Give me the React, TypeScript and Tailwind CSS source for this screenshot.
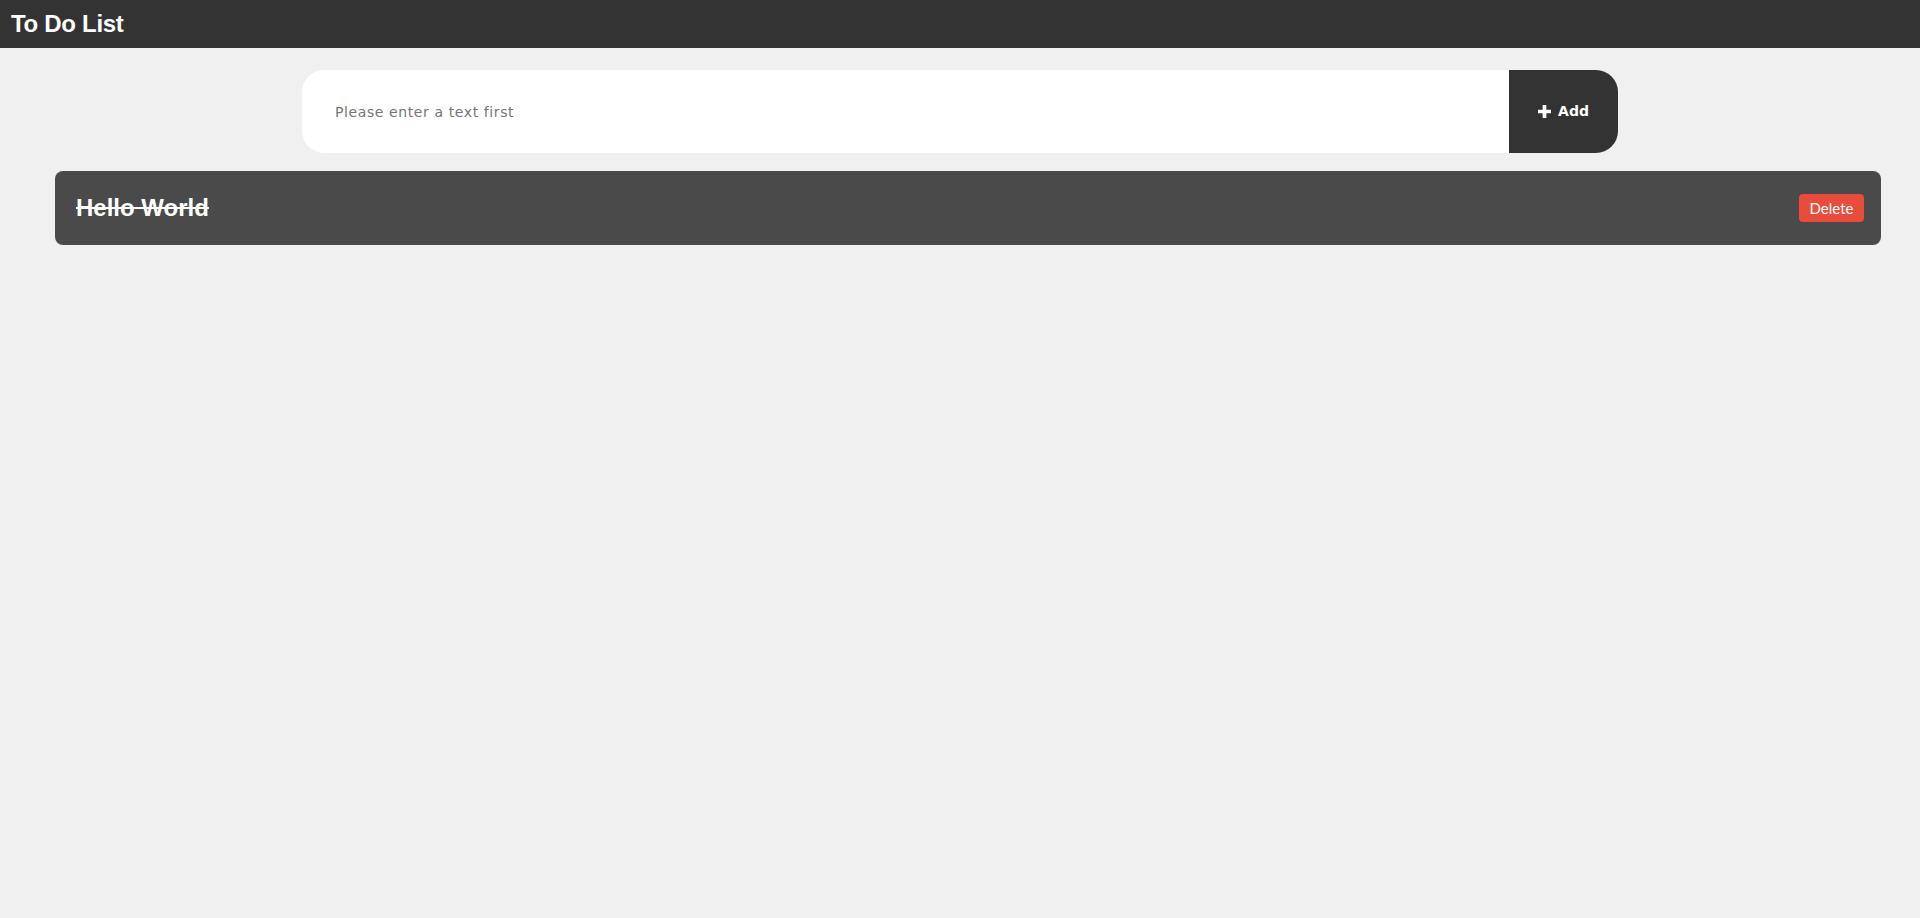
import { useState } from "react";

interface TodoItem {
  id: number;
  text: string;
  done: boolean;
}

function PlusIcon() {
  return (
    <svg viewBox="0 0 14 14" className="h-[13px] w-[13px]" fill="currentColor">
      <path d="M5 0h4v5h5v4H9v5H5V9H0V5h5z" />
    </svg>
  );
}

export default function App() {
  const [text, setText] = useState("");
  const [todos, setTodos] = useState<TodoItem[]>([
    { id: 1, text: "Hello World", done: true },
  ]);

  const addTodo = () => {
    if (!text.trim()) return;
    setTodos([...todos, { id: Date.now(), text: text.trim(), done: false }]);
    setText("");
  };

  const toggleTodo = (id: number) => {
    setTodos(todos.map((t) => (t.id === id ? { ...t, done: !t.done } : t)));
  };

  const deleteTodo = (id: number) => {
    setTodos(todos.filter((t) => t.id !== id));
  };

  return (
    <div className="min-h-screen bg-[#f0f0f0] font-['Liberation_Sans',Arial,sans-serif]">
      <header className="flex h-[48px] items-center bg-[#333333] px-[11px]">
        <h1 className="text-[24px] font-bold tracking-[-0.3px] text-white">To Do List</h1>
      </header>

      <div className="mx-auto mt-[22px] flex h-[83px] w-[1316px]">
        <input
          value={text}
          onChange={(e) => setText(e.target.value)}
          onKeyDown={(e) => e.key === "Enter" && addTodo()}
          placeholder="Please enter a text first"
          className="h-full flex-1 rounded-l-[22px] bg-white pl-[33px] font-['DejaVu_Sans',Verdana,sans-serif] text-[14px] tracking-[0.6px] text-[#333] outline-none placeholder:text-[#757575]"
        />
        <button
          onClick={addTodo}
          className="flex h-full w-[109px] items-center justify-center gap-[7px] rounded-r-[22px] bg-[#333333] font-['DejaVu_Sans',Verdana,sans-serif] text-[14px] font-bold text-white"
        >
          <PlusIcon />
          Add
        </button>
      </div>

      <ul className="mt-[18px] ml-[55px] w-[1826px]">
        {todos.map((todo) => (
          <li
            key={todo.id}
            className="flex h-[74px] items-center justify-between rounded-[8px] bg-[#4a4a4a] pl-[21px] pr-[17px]"
          >
            <span
              onClick={() => toggleTodo(todo.id)}
              className={
                todo.done
                  ? "cursor-pointer text-[24px] font-bold text-white line-through"
                  : "cursor-pointer text-[24px] font-bold text-white"
              }
            >
              {todo.text}
            </span>
            <button
              onClick={() => deleteTodo(todo.id)}
              className="h-[28px] w-[65px] rounded-[4px] bg-[#e74c3c] font-['Lato',sans-serif] text-[15px] text-white"
            >
              Delete
            </button>
          </li>
        ))}
      </ul>
    </div>
  );
}
